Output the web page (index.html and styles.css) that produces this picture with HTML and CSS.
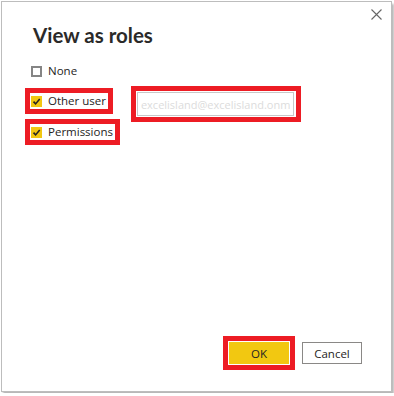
FILE: index.html
```html
<!DOCTYPE html>
<html>
<head>
<meta charset="utf-8">
<link rel="stylesheet" href="styles.css">
</head>
<body>
<div class="dialog">
  <div class="header">
    <svg class="close" width="11" height="11" viewBox="0 0 11 11"><path d="M0.5 0.5 L10.5 10.5 M10.5 0.5 L0.5 10.5" stroke="#666" stroke-width="1.1" fill="none"/></svg>
  </div>
  <h1 class="title">View as roles</h1>
  <div class="options">
    <div class="item plain">
      <svg class="cb" width="11" height="11" viewBox="0 0 11 11"><rect x="1" y="1" width="9" height="9" fill="#fff" stroke="#858585" stroke-width="2"/></svg>
      <span class="label">None</span>
    </div>
    <div class="row">
      <div class="item marked">
        <svg class="cb" width="11" height="11" viewBox="0 0 11 11"><rect width="11" height="11" fill="#f2c811"/><path d="M2.5 5.6 L4.6 7.9 L8.7 3.1" stroke="#252423" stroke-width="1.6" fill="none"/></svg>
        <span class="label">Other user</span>
      </div>
      <div class="email marked">
        <input class="field" type="text" placeholder="excelisland@excelisland.onmicrosoft.com">
      </div>
    </div>
    <div class="item marked perm">
      <svg class="cb" width="11" height="11" viewBox="0 0 11 11"><rect width="11" height="11" fill="#f2c811"/><path d="M2.5 5.6 L4.6 7.9 L8.7 3.1" stroke="#252423" stroke-width="1.6" fill="none"/></svg>
      <span class="label">Permissions</span>
    </div>
  </div>
  <div class="footer">
    <div class="ok-wrap marked"><button class="btn ok">OK</button></div>
    <button class="btn cancel">Cancel</button>
  </div>
</div>
</body>
</html>
```
FILE: styles.css
```css
html, body {
  margin: 0;
  background: #fff;
}
body {
  padding: 1px;
  font-family: "Open Sans", "Noto Sans", sans-serif;
  color: #252423;
}
.dialog {
  box-sizing: border-box;
  width: 391px;
  height: 391px;
  border: 1px solid #bdbdbd;
  box-shadow: 2px 3px 2px rgba(0,0,0,0.28);
  display: flex;
  flex-direction: column;
  background: #fff;
}
.header {
  display: flex;
  justify-content: flex-end;
  padding: 7px 9px 0 0;
  height: 11px;
}
.close { display: block; }
.title {
  margin: 1px 0 0 31px;
  font-family: "Lato", "Open Sans", sans-serif;
  font-size: 20.5px;
  line-height: 28px;
  font-weight: 700;
  color: #2b2a29;
}
.options {
  display: flex;
  flex-direction: column;
  padding-left: 23px;
  margin-top: 9px;
}
.item {
  display: flex;
  align-items: center;
  gap: 6px;
  height: 16px;
  padding: 0 2px 0 1px;
  border: 5px solid transparent;
  align-self: flex-start;
}
.marked { border: 5px solid #ed1c24; }
.cb { display: block; flex: none; }
.label {
  font-size: 11.5px;
  line-height: 16px;
  white-space: nowrap;
}
.row {
  display: flex;
  align-items: flex-start;
  margin-top: 4px;
}
.email {
  margin: -2px 0 -10px 18px;
  padding: 1px 2px 1px 1px;
  background: #fff;
}
.field {
  box-sizing: border-box;
  display: block;
  width: 157px;
  height: 24px;
  border: 1px solid #c8c8c8;
  padding: 0 3px;
  font-family: "Open Sans", sans-serif;
  font-size: 11px;
  color: #252423;
  outline: none;
}
.field::placeholder { color: #dcdcdc; }
.perm { margin-top: 5px; }
.footer {
  margin-top: auto;
  display: flex;
  justify-content: flex-end;
  align-items: center;
  gap: 7px;
  padding: 0 29px 21px 0;
}
.ok-wrap {
  padding: 1px;
  background: #fff;
}
.btn {
  box-sizing: border-box;
  display: block;
  width: 60px;
  height: 22px;
  padding: 0;
  margin: 0;
  font-family: "Open Sans", sans-serif;
  font-size: 11.5px;
  color: #252423;
  background: #fff;
}
.ok {
  background: #f2c811;
  border: 1px solid #f2c811;
}
.cancel {
  border: 1px solid #8a8886;
}
```
